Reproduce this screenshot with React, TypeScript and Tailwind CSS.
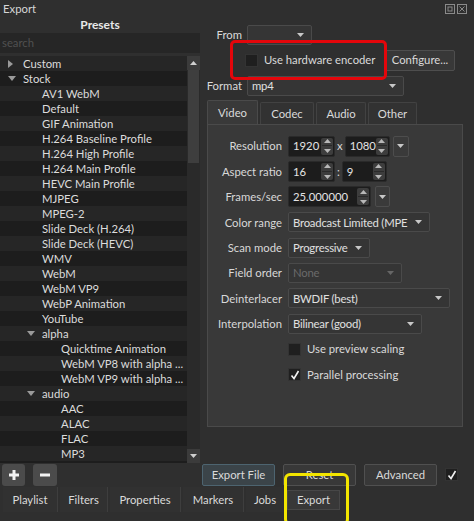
import React from "react";

const FONT = "font-['Lato','Noto_Sans',sans-serif]";

function DownTri({ c = "#c8c8c8" }: { c?: string }) {
  return (
    <svg width="7" height="4" viewBox="0 0 7 4" className="shrink-0">
      <polygon points="0,0 7,0 3.5,4" fill={c} />
    </svg>
  );
}

function Combo({ cls, text, disabled }: { cls: string; text: string; disabled?: boolean }) {
  return (
    <div
      className={
        "flex items-center h-[20px] bg-[#353535] border border-[#4a4a4a] rounded-[2px] pl-[4px] pr-[7px] " + cls
      }
    >
      <span
        className={
          "flex-1 whitespace-nowrap tracking-[-0.2px] " + (disabled ? "text-[#6a6a6a]" : "text-[#e0e0e0]")
        }
      >
        {text}
      </span>
      <div className="ml-[3px]">
        <DownTri c={disabled ? "#666" : "#c8c8c8"} />
      </div>
    </div>
  );
}

function Spin({ cls, text }: { cls: string; text: string }) {
  return (
    <div className={"flex h-[21px] bg-[#1c1c1c] border border-[#2a2a2a] rounded-[2px] " + cls}>
      <span className="flex-1 pl-[4px] flex items-center text-[#e4e4e4] whitespace-nowrap">{text}</span>
      <div className="w-[12px] my-[1px] mr-[1px] bg-[#3d3d3d] rounded-[2px] flex flex-col items-center justify-around">
        <svg width="7" height="4" viewBox="0 0 7 4">
          <polygon points="0,4 7,4 3.5,0" fill="#b8b8b8" />
        </svg>
        <div className="w-[10px] h-px bg-[#2a2a2a]" />
        <svg width="7" height="4" viewBox="0 0 7 4">
          <polygon points="0,0 7,0 3.5,4" fill="#b8b8b8" />
        </svg>
      </div>
    </div>
  );
}

function DropBtn({ cls }: { cls: string }) {
  return (
    <div className={"h-[21px] bg-[#3a3a3a] border border-[#4d4d4d] rounded-[2px] flex items-center justify-center " + cls}>
      <DownTri />
    </div>
  );
}

function Check({ checked }: { checked?: boolean }) {
  return (
    <div className="w-[13px] h-[13px] bg-[#1f1f1f] border border-[#333] flex items-center justify-center">
      {checked && (
        <svg width="10" height="10" viewBox="0 0 10 10">
          <polyline points="1.5,5.5 4,8.5 8.5,1" fill="none" stroke="#f0f0f0" strokeWidth="1.6" />
        </svg>
      )}
    </div>
  );
}

type Row = { t: string; lvl: number; arrow?: "right" | "down" };

const rows: Row[] = [
  { t: "Custom", lvl: 0, arrow: "right" },
  { t: "Stock", lvl: 0, arrow: "down" },
  { t: "AV1 WebM", lvl: 1 },
  { t: "Default", lvl: 1 },
  { t: "GIF Animation", lvl: 1 },
  { t: "H.264 Baseline Profile", lvl: 1 },
  { t: "H.264 High Profile", lvl: 1 },
  { t: "H.264 Main Profile", lvl: 1 },
  { t: "HEVC Main Profile", lvl: 1 },
  { t: "MJPEG", lvl: 1 },
  { t: "MPEG-2", lvl: 1 },
  { t: "Slide Deck (H.264)", lvl: 1 },
  { t: "Slide Deck (HEVC)", lvl: 1 },
  { t: "WMV", lvl: 1 },
  { t: "WebM", lvl: 1 },
  { t: "WebM VP9", lvl: 1 },
  { t: "WebP Animation", lvl: 1 },
  { t: "YouTube", lvl: 1 },
  { t: "alpha", lvl: 1, arrow: "down" },
  { t: "Quicktime Animation", lvl: 2 },
  { t: "WebM VP8 with alpha ...", lvl: 2 },
  { t: "WebM VP9 with alpha ...", lvl: 2 },
  { t: "audio", lvl: 1, arrow: "down" },
  { t: "AAC", lvl: 2 },
  { t: "ALAC", lvl: 2 },
  { t: "FLAC", lvl: 2 },
  { t: "MP3", lvl: 2 },
];

function TreeRow({ r, i }: { r: Row; i: number }) {
  const textX = 23 + 19 * r.lvl;
  return (
    <div className={"relative h-[15px] flex items-center " + (i % 2 === 0 ? "bg-[#262626]" : "bg-[#1d1d1d]")}>
      {r.arrow && (
        <div className="absolute top-0 h-[15px] flex items-center" style={{ left: textX - 15 }}>
          {r.arrow === "right" ? (
            <svg width="5" height="8" viewBox="0 0 5 8">
              <polygon points="0,0 5,4 0,8" fill="#9a9a9a" />
            </svg>
          ) : (
            <svg width="8" height="5" viewBox="0 0 8 5">
              <polygon points="0,0 8,0 4,5" fill="#9a9a9a" />
            </svg>
          )}
        </div>
      )}
      <span className="whitespace-nowrap text-[#dcdcdc]" style={{ paddingLeft: textX }}>
        {r.t}
      </span>
    </div>
  );
}

function FormRow({ label, children }: { label: string; children: React.ReactNode }) {
  return (
    <div className="flex items-center h-[20px]">
      <span className="w-[74px] text-right whitespace-nowrap text-[#d8d8d8]">{label}</span>
      <div className="ml-[6px] flex items-center">{children}</div>
    </div>
  );
}

export default function App() {
  return (
    <div className={"relative w-[474px] h-[521px] bg-[#2f2f2f] overflow-hidden text-[11.3px] leading-none text-[#dadada] " + FONT}>
      {/* title bar */}
      <div className="h-[17px] flex items-center justify-between pl-[3px] pr-[7px]">
        <span className="text-[#d6d6d6]">Export</span>
        <div className="flex gap-[2px]">
          <svg width="10" height="10" viewBox="0 0 10 10">
            <rect x="0.5" y="0.5" width="9" height="9" fill="none" stroke="#8a8a8a" />
            <rect x="3" y="3" width="4" height="4" fill="none" stroke="#8a8a8a" />
          </svg>
          <svg width="10" height="10" viewBox="0 0 10 10">
            <rect x="0.5" y="0.5" width="9" height="9" fill="none" stroke="#8a8a8a" />
            <path d="M2.5 2.5 L7.5 7.5 M7.5 2.5 L2.5 7.5" stroke="#8a8a8a" />
          </svg>
        </div>
      </div>

      {/* main */}
      <div className="flex h-[446px]">
        {/* left */}
        <div className="w-[200px] flex flex-col">
          <div className="h-[16px] flex items-center justify-center font-bold text-[12px] text-[#e8e8e8]">Presets</div>
          <div className="h-[20px] bg-[#262626] flex items-center pl-[2px] text-[#505050]">search</div>
          <div className="mt-[3px] flex flex-1">
            <div className="w-[187px] flex flex-col bg-[#1d1d1d]">
              {rows.map((r, i) => (
                <TreeRow key={i} r={r} i={i} />
              ))}
            </div>
            <div className="w-[13px] flex flex-col bg-[#2a2a2a]">
              <div className="h-[14px] bg-[#3b3b3b] flex items-center justify-center">
                <svg width="7" height="4" viewBox="0 0 7 4">
                  <polygon points="0,4 7,4 3.5,0" fill="#cfcfcf" />
                </svg>
              </div>
              <div className="h-[93px] mx-[1px] bg-[#3e3e3e]" />
              <div className="flex-1" />
              <div className="h-[14px] bg-[#3b3b3b] flex items-center justify-center">
                <svg width="7" height="4" viewBox="0 0 7 4">
                  <polygon points="0,0 7,0 3.5,4" fill="#cfcfcf" />
                </svg>
              </div>
            </div>
          </div>
        </div>

        {/* right */}
        <div className="flex-1 flex flex-col">
          <div className="mt-[8px] h-[20px] flex items-center">
            <span className="w-[42px] text-right">From</span>
            <Combo cls="ml-[5px] w-[65px]" text="" />
          </div>
          <div className="mt-[5px] h-[20px] flex items-center pl-[45px] pr-[19px]">
            <Check />
            <span className="ml-[6px] whitespace-nowrap">Use hardware encoder</span>
            <div className="ml-auto w-[70px] h-[21px] bg-[#383838] border border-[#4e4e4e] rounded-[2px] flex items-center justify-center whitespace-nowrap">
              Configure...
            </div>
          </div>
          <div className="mt-[6px] h-[20px] flex items-center">
            <span className="w-[42px] text-right">Format</span>
            <Combo cls="ml-[5px] w-[157px]" text="mp4" />
          </div>
          {/* tabs */}
          <div className="mt-[4px] ml-[7px] h-[24px] flex items-end gap-[2px]">
            <div className="w-[51px] h-[24px] bg-[#393939] border border-b-0 border-[#4a4a4a] rounded-t-[2px] flex items-center justify-center">
              Video
            </div>
            <div className="w-[54px] h-[22px] bg-[#323232] border border-b-0 border-[#424242] rounded-t-[2px] flex items-center justify-center">
              Codec
            </div>
            <div className="w-[50px] h-[22px] bg-[#323232] border border-b-0 border-[#424242] rounded-t-[2px] flex items-center justify-center">
              Audio
            </div>
            <div className="w-[49px] h-[22px] bg-[#323232] border border-b-0 border-[#424242] rounded-t-[2px] flex items-center justify-center">
              Other
            </div>
          </div>
          <div className="ml-[7px] w-[256px] h-[303px] bg-[#393939] border border-[#4a4a4a] flex flex-col pt-[11px] gap-[5.4px]">
            <FormRow label="Resolution">
              <Spin cls="w-[47px]" text="1920" />
              <span className="mx-[2px]">x</span>
              <Spin cls="w-[45px]" text="1080" />
              <DropBtn cls="ml-[3px] w-[16px]" />
            </FormRow>
            <FormRow label="Aspect ratio">
              <Spin cls="w-[47px]" text="16" />
              <span className="mx-[2px]">:</span>
              <Spin cls="w-[45px]" text="9" />
            </FormRow>
            <FormRow label="Frames/sec">
              <Spin cls="w-[83px]" text="25.000000" />
              <DropBtn cls="ml-[4px] w-[15px]" />
            </FormRow>
            <FormRow label="Color range">
              <Combo cls="w-[142px]" text="Broadcast Limited (MPE" />
            </FormRow>
            <FormRow label="Scan mode">
              <Combo cls="w-[82px]" text="Progressive" />
            </FormRow>
            <FormRow label="Field order">
              <Combo cls="w-[114px]" text="None" disabled />
            </FormRow>
            <FormRow label="Deinterlacer">
              <Combo cls="w-[162px]" text="BWDIF (best)" />
            </FormRow>
            <FormRow label="Interpolation">
              <Combo cls="w-[134px]" text="Bilinear (good)" />
            </FormRow>
            <div className="h-[20px] flex items-center pl-[80px]">
              <Check />
              <span className="ml-[6px]">Use preview scaling</span>
            </div>
            <div className="h-[20px] flex items-center pl-[80px]">
              <Check checked />
              <span className="ml-[6px]">Parallel processing</span>
            </div>
          </div>
        </div>
      </div>

      {/* bottom buttons */}
      <div className="h-[23px] flex items-center">
        <div className="ml-[2px] w-[23px] h-[22px] bg-[#4b4b4b] rounded-[3px] flex items-center justify-center">
          <svg width="12" height="12" viewBox="0 0 12 12">
            <path d="M6 1 V11 M1 6 H11" stroke="#f2f2f2" strokeWidth="3" />
          </svg>
        </div>
        <div className="ml-[8px] w-[24px] h-[22px] bg-[#4b4b4b] rounded-[3px] flex items-center justify-center">
          <svg width="12" height="12" viewBox="0 0 12 12">
            <path d="M1 6 H11" stroke="#f2f2f2" strokeWidth="3" />
          </svg>
        </div>
        <div className="ml-[145px] w-[73px] h-[22px] bg-[#3b4449] border border-[#4d6470] rounded-[2px] flex items-center justify-center">
          Export File
        </div>
        <div className="ml-[8px] w-[73px] h-[22px] bg-[#383838] border border-[#505050] rounded-[2px] flex items-center justify-center">
          Reset
        </div>
        <div className="ml-[8px] w-[73px] h-[22px] bg-[#383838] border border-[#505050] rounded-[2px] flex items-center justify-center">
          Advanced
        </div>
        <div className="ml-[8px]">
          <Check checked />
        </div>
      </div>

      {/* bottom tabs */}
      <div className="mt-[1px] h-[25px] flex items-stretch pl-[3px] gap-[2px]">
        <div className="w-[55px] bg-[#313131] border-r border-[#3e3e3e] flex items-center justify-center">Playlist</div>
        <div className="w-[48px] bg-[#313131] border-r border-[#3e3e3e] flex items-center justify-center">Filters</div>
        <div className="w-[71px] bg-[#313131] border-r border-[#3e3e3e] flex items-center justify-center">Properties</div>
        <div className="w-[61px] bg-[#313131] border-r border-[#3e3e3e] flex items-center justify-center">Markers</div>
        <div className="w-[39px] bg-[#313131] border-r border-[#3e3e3e] flex items-center justify-center">Jobs</div>
        <div className="w-[53px] mt-[3px] mb-[2px] bg-[#383838] border border-[#474747] flex items-center justify-center">Export</div>
      </div>

      {/* annotation overlays */}
      <div className="absolute left-[230px] top-[40px] w-[157px] h-[40px] border-[3px] border-[#e4060b] rounded-[5px]" />
      <div className="absolute left-[284px] top-[473px] w-[65px] h-[52px] border-[3px] border-[#f3e500] rounded-[6px]" />
    </div>
  );
}
